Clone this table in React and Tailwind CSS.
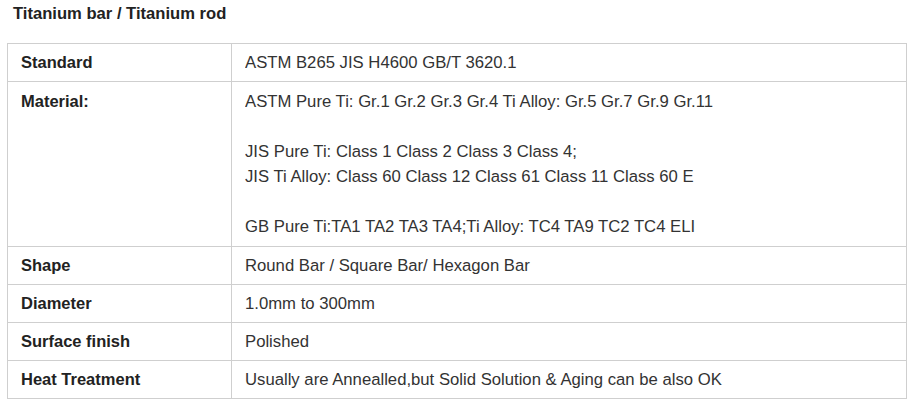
import React from "react";

const rows = [
  { label: "Standard", lines: ["ASTM B265 JIS H4600 GB/T 3620.1"] },
  {
    label: "Material:",
    lines: [
      "ASTM Pure Ti: Gr.1 Gr.2 Gr.3 Gr.4 Ti Alloy: Gr.5 Gr.7 Gr.9 Gr.11",
      "",
      "JIS Pure Ti: Class 1 Class 2 Class 3 Class 4;",
      "JIS Ti Alloy: Class 60 Class 12 Class 61 Class 11 Class 60 E",
      "",
      "GB Pure Ti:TA1 TA2 TA3 TA4;Ti Alloy: TC4 TA9 TC2 TC4 ELI",
    ],
  },
  { label: "Shape", lines: ["Round Bar / Square Bar/ Hexagon Bar"] },
  { label: "Diameter", lines: ["1.0mm to 300mm"] },
  { label: "Surface finish", lines: ["Polished"] },
  { label: "Heat Treatment", lines: ["Usually are Annealled,but Solid Solution & Aging can be also OK"] },
];

const App = () => {
  return (
    <div className="bg-white min-h-screen text-[#333] font-['Liberation_Sans',Arial,sans-serif]">
      <h2 className="pl-[13px] pt-[4px] text-[16.6px] font-bold leading-[20px] text-[#222]">
        Titanium bar / Titanium rod
      </h2>
      <table className="ml-[7px] mt-[19px] w-[900px] border-collapse text-[16.7px] leading-[25px]">
        <tbody>
          {rows.map((row) => {
            const pad = row.lines.length > 1 ? "pt-[7px] pb-[7px]" : "py-[6px]";
            return (
              <tr key={row.label}>
                <td className={`w-[224px] border border-[#cfcfcf] px-[13px] align-top ${pad}`}>
                  <div className="h-[25px] overflow-hidden whitespace-nowrap text-[16.5px] font-bold text-[#222]">
                    {row.label}
                  </div>
                </td>
                <td className={`border border-[#cfcfcf] px-[13px] align-top ${pad}`}>
                  {row.lines.map((line, i) => (
                    <div key={i} className="h-[25px] overflow-hidden whitespace-nowrap">
                      {line}
                    </div>
                  ))}
                </td>
              </tr>
            );
          })}
        </tbody>
      </table>
    </div>
  );
};

export default App;
